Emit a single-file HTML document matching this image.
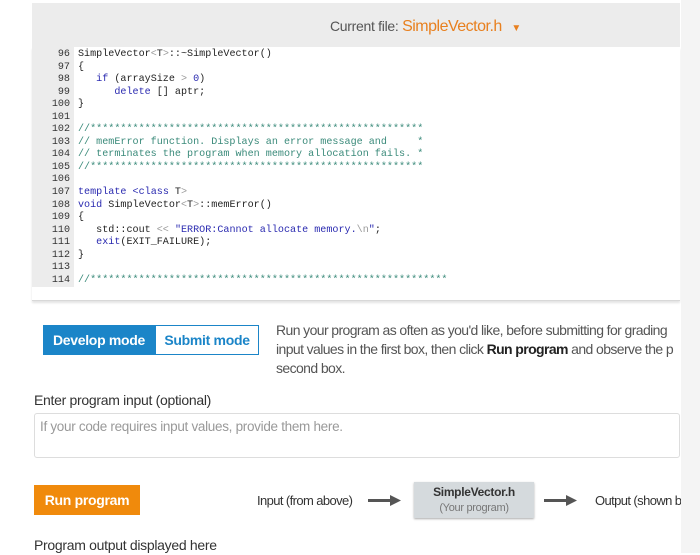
<!DOCTYPE html>
<html><head><style>
body{margin:0;width:700px;height:553px;overflow:hidden;background:#fff;font-family:"Liberation Sans",sans-serif;position:relative;letter-spacing:-0.3px}
.strip{position:absolute;left:681px;top:0;width:19px;height:553px;background:#f4f4f4}
.hdr{position:absolute;left:32px;top:3px;width:648px;height:44px;background:#ececec}
.hdr .t{position:absolute;left:298px;top:15px;font-size:14px;color:#555}
.hdr .f{color:#e8801f;font-size:16px;letter-spacing:-0.5px}
.code{position:absolute;left:32px;top:47px;width:648px;height:253px;background:#fff;border-bottom:1px solid #d8d8d8;box-shadow:0 2px 2px #e4e4e4}
.gut{position:absolute;left:0;top:0;width:42px;height:240px;background:#ececec}
pre{margin:0;position:absolute;top:2px;font-family:"Liberation Mono",monospace;font-size:10.1px;line-height:12.55px;color:#222;letter-spacing:0}
.ln{left:0;width:38px;text-align:right;color:#333}
.src{left:46px}
.k{color:#2a2ab0}.c{color:#3a8a7a}.s{color:#2a2ab0}.g{color:#999}
.btn{position:absolute;font-weight:bold;font-size:14px;text-align:center;box-sizing:border-box}
.p{position:absolute;font-size:14px;color:#555;line-height:19px}
</style></head><body>
<div class="strip"></div>
<div class="hdr"><div class="t">Current file: <span class="f">SimpleVector.h</span> <span style="color:#e8801f;font-size:10px;margin-left:6px">▼</span></div></div>
<div class="code"><div class="gut"></div>
<pre class="ln">96
97
98
99
100
101
102
103
104
105
106
107
108
109
110
111
112
113
114</pre>
<pre class="src">SimpleVector<span class="g">&lt;</span>T<span class="g">&gt;</span>::~SimpleVector()
{
   <span class="k">if</span> (arraySize <span class="g">&gt;</span> <span class="k">0</span>)
      <span class="k">delete</span> [] aptr;
}

<span class="c">//*******************************************************</span>
<span class="c">// memError function. Displays an error message and     *</span>
<span class="c">// terminates the program when memory allocation fails. *</span>
<span class="c">//*******************************************************</span>

<span class="k">template</span> <span class="k">&lt;class</span> T<span class="g">&gt;</span>
<span class="k">void</span> SimpleVector<span class="g">&lt;</span>T<span class="g">&gt;</span>::memError()
{
   std::cout <span class="g">&lt;&lt;</span> <span class="s">"ERROR:Cannot allocate memory.<span class="g">\n</span>"</span>;
   <span class="k">exit</span>(EXIT_FAILURE);
}

<span class="c">//***********************************************************</span></pre>
</div>
<div class="btn" style="left:43px;top:325px;width:112px;height:30px;background:#1b85c8;color:#fff;line-height:30px">Develop mode</div>
<div class="btn" style="left:155px;top:325px;width:104px;height:30px;border:1px solid #1b85c8;color:#1b85c8;line-height:28px">Submit mode</div>
<div class="p" style="left:276px;top:321px;white-space:nowrap;width:404px;overflow:hidden;letter-spacing:-0.6px">Run your program as often as you'd like, before submitting for grading<br>input values in the first box, then click <b style="color:#222">Run program</b> and observe the p<br>second box.</div>
<div class="strip" style="left:681px"></div>
<div class="p" style="left:34px;top:391px;color:#333">Enter program input (optional)</div>
<div style="position:absolute;left:34px;top:413px;width:646px;height:45px;border:1px solid #ddd;border-radius:3px;box-sizing:border-box"></div>
<div class="p" style="left:40px;top:417px;color:#999;font-size:13.5px">If your code requires input values, provide them here.</div>
<div class="btn" style="left:34px;top:485px;width:106px;height:30px;background:#f08a0c;color:#fff;line-height:30px">Run program</div>
<div class="p" style="left:257px;top:491px;font-size:13px;color:#333;letter-spacing:-0.6px">Input (from above)</div>
<svg style="position:absolute;left:368px;top:495px" width="34" height="12"><rect x="0" y="4" width="24" height="3" fill="#555"/><path d="M22 0L33 5.5L22 11Z" fill="#555"/></svg>
<div style="position:absolute;left:414px;top:482px;width:120px;height:36px;background:#d5dadd;box-shadow:0 1px 2px #aaa;text-align:center;font-size:12px;color:#333;line-height:15px;padding-top:3px;box-sizing:border-box"><b style="font-weight:600">SimpleVector.h</b><br><span style="font-size:11px;color:#777">(Your program)</span></div>
<svg style="position:absolute;left:544px;top:495px" width="34" height="12"><rect x="0" y="4" width="24" height="3" fill="#555"/><path d="M22 0L33 5.5L22 11Z" fill="#555"/></svg>
<div class="p" style="left:595px;top:491px;font-size:13px;color:#333;width:86px;overflow:hidden;white-space:nowrap;letter-spacing:-0.6px">Output (shown below)</div>
<div class="p" style="left:34px;top:536px;color:#333">Program output displayed here</div>
</body></html>
